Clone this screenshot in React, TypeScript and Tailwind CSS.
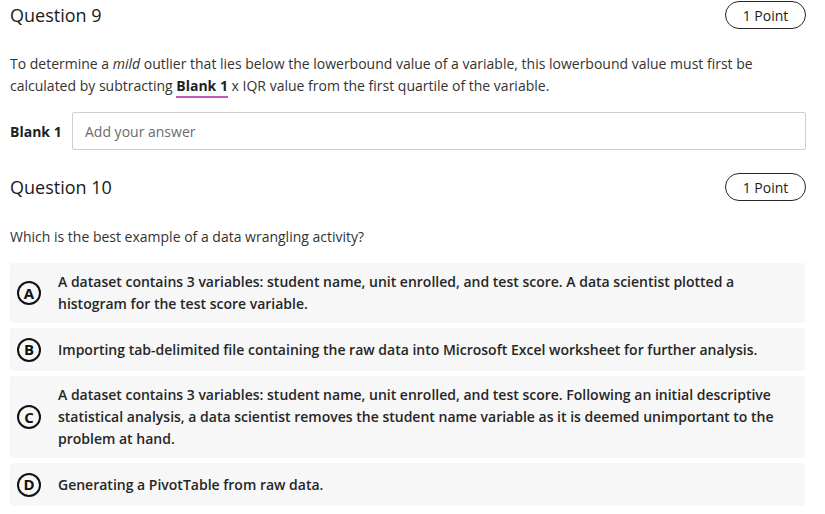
import React from "react";

const options = [
  {
    letter: "A",
    text: "A dataset contains 3 variables: student name, unit enrolled, and test score. A data scientist plotted a histogram for the test score variable.",
  },
  {
    letter: "B",
    text: "Importing tab-delimited file containing the raw data into Microsoft Excel worksheet for further analysis.",
  },
  {
    letter: "C",
    text: "A dataset contains 3 variables: student name, unit enrolled, and test score. Following an initial descriptive statistical analysis, a data scientist removes the student name variable as it is deemed unimportant to the problem at hand.",
  },
  { letter: "D", text: "Generating a PivotTable from raw data." },
];

function Header({ title }: { title: string }) {
  return (
    <div className="flex items-center justify-between h-[28px]">
      <h2 className="text-[18px] leading-[28px] text-[#1a1a1a] font-normal">{title}</h2>
      <span className="h-[28px] w-[81px] flex items-center justify-center rounded-full border border-[#262626] text-[14px] font-medium text-[#1a1a1a]">
        1 Point
      </span>
    </div>
  );
}

export default function App() {
  return (
    <div
      className="w-[825px] h-[514px] bg-white pl-[10px] pr-[19px] pt-[1px] overflow-hidden text-[#262626]"
      style={{ fontFamily: '"Open Sans", "Noto Sans", sans-serif' }}
    >
      <Header title="Question 9" />
      <p className="mt-[24px] text-[14px] leading-[22px] text-[#333333]">
        To determine a <em>mild</em> outlier that lies below the lowerbound value of a variable, this lowerbound value must first be calculated by subtracting{" "}
        <span className="font-bold text-[#1f1f1f] border-b-2 border-[#c259b5] pb-[1px]">Blank 1</span> x IQR value from the first quartile of the variable.
      </p>
      <div className="mt-[15px] flex items-center">
        <span className="w-[62px] text-[14px] font-bold text-[#1f1f1f]">Blank 1</span>
        <div className="flex-1 h-[38px] border border-[#cfcfcf] rounded-[2px] flex items-center pl-[12px] text-[14px] text-[#6b6b6b]">
          Add your answer
        </div>
      </div>
      <div className="mt-[23px]">
        <Header title="Question 10" />
      </div>
      <p className="mt-[25px] text-[14px] leading-[22px] text-[#333333]">
        Which is the best example of a data wrangling activity?
      </p>
      <div className="mt-[15px] flex flex-col gap-[5px] pr-[1px]">
        {options.map((o) => (
          <div key={o.letter} className="flex items-center bg-[#f7f7f7] rounded-[3px] py-[8px] pl-[7px] pr-[20px]">
            <div className="h-[27px] w-[24px] flex items-center justify-center shrink-0">
              <span className="flex items-center justify-center shrink-0 w-[24px] h-[24px] rounded-full border-2 border-[#111] text-[15px] leading-none font-bold text-[#111]">
                {o.letter}
              </span>
            </div>
            <p className="ml-[17px] text-[14px] leading-[22px] font-semibold text-[#262626]">{o.text}</p>
          </div>
        ))}
      </div>
    </div>
  );
}
